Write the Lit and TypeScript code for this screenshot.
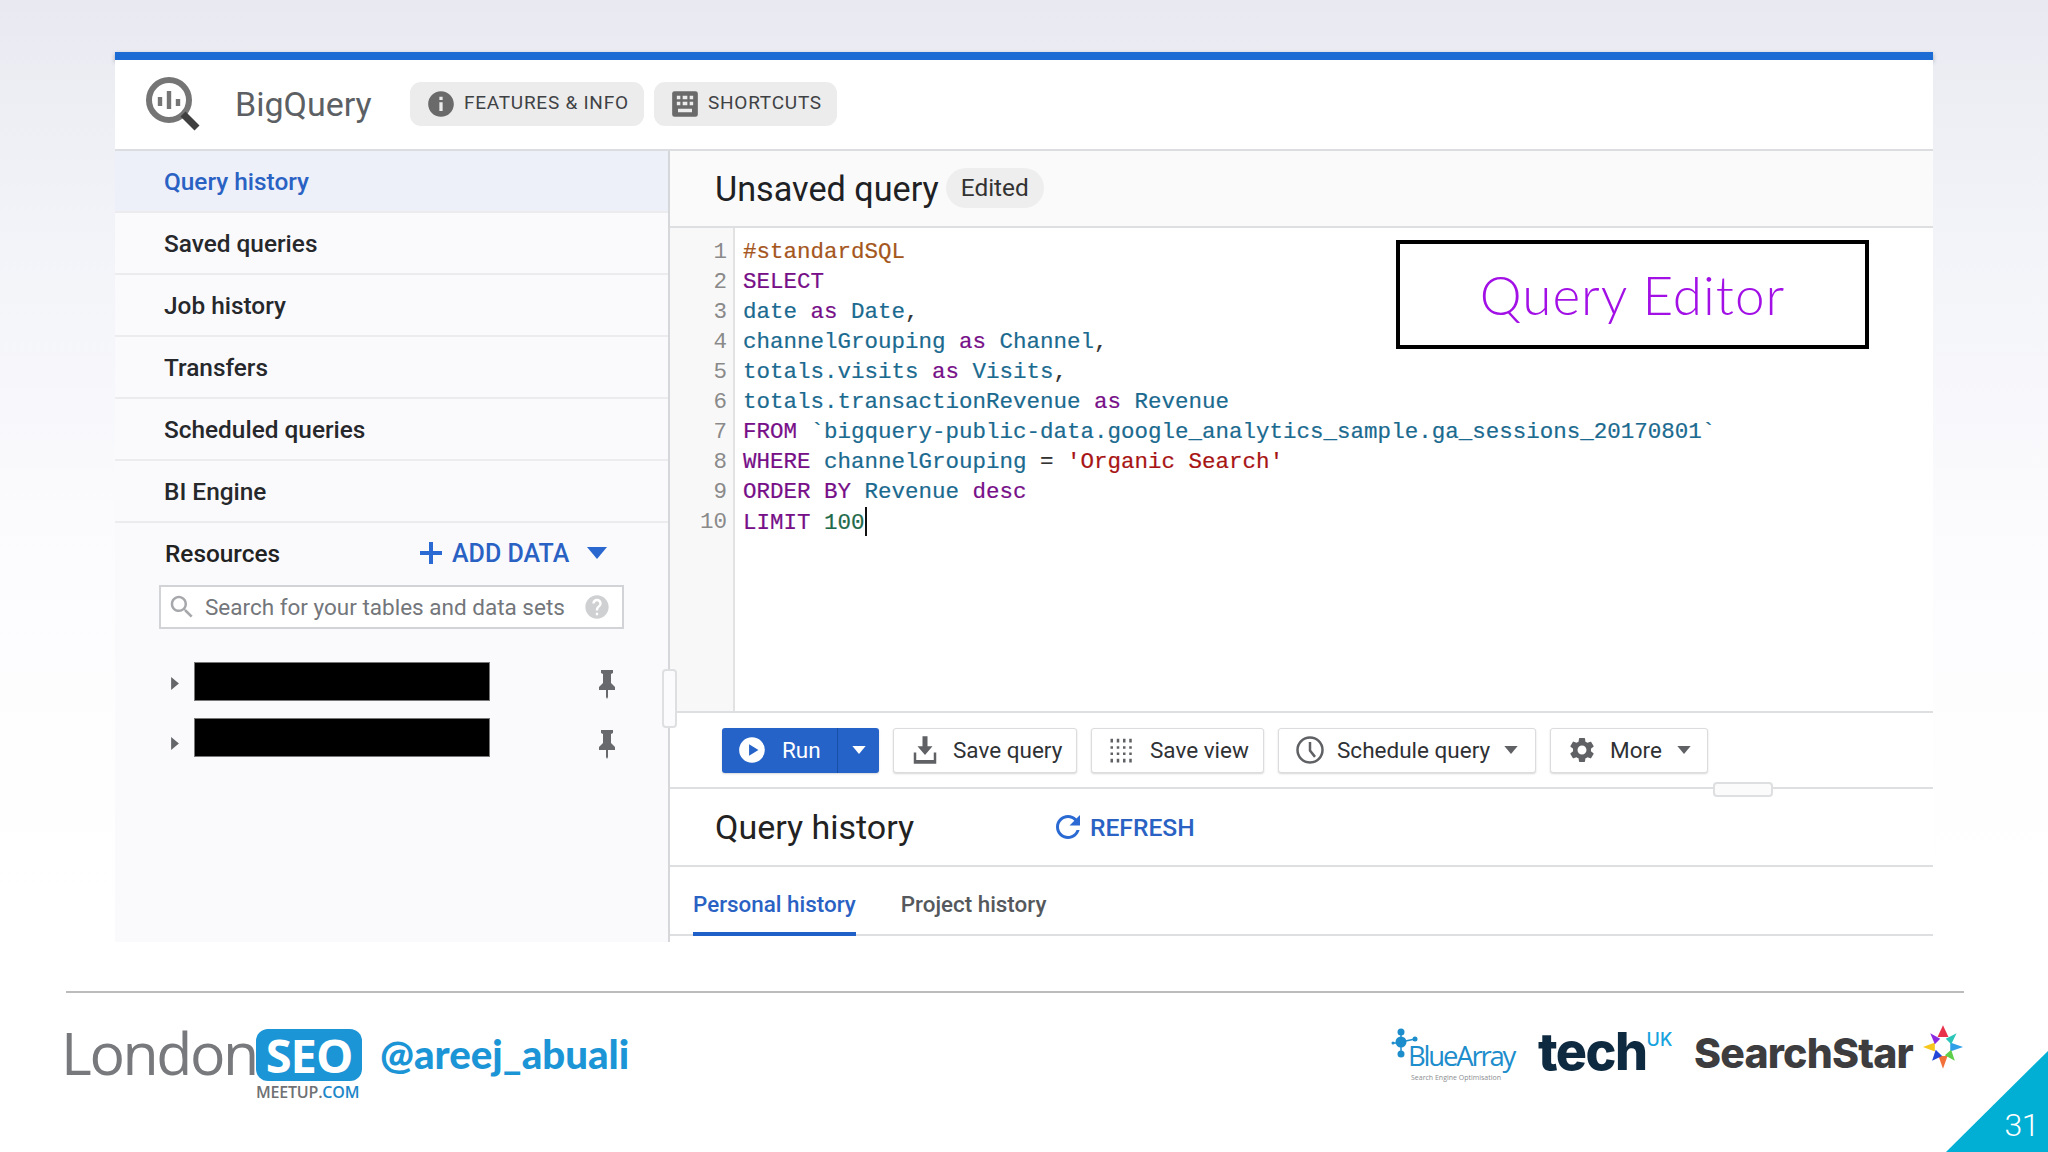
import { LitElement, html, css } from "lit";
import { customElement } from "lit/decorators.js";

type Tok = [string, string];
const K = "k", I = "i", P = "p", C = "c", S = "s", N = "n";
const CODE: Tok[][] = [
  [["#standardSQL", C]],
  [["SELECT", K]],
  [["date", I], [" ", P], ["as", K], [" ", P], ["Date", I], [",", P]],
  [["channelGrouping", I], [" ", P], ["as", K], [" ", P], ["Channel", I], [",", P]],
  [["totals.visits", I], [" ", P], ["as", K], [" ", P], ["Visits", I], [",", P]],
  [["totals.transactionRevenue", I], [" ", P], ["as", K], [" ", P], ["Revenue", I]],
  [["FROM", K], [" ", P], ["`bigquery-public-data.google_analytics_sample.ga_sessions_20170801`", I]],
  [["WHERE", K], [" ", P], ["channelGrouping", I], [" = ", P], ["'Organic Search'", S]],
  [["ORDER BY", K], [" ", P], ["Revenue", I], [" ", P], ["desc", K]],
  [["LIMIT", K], [" ", P], ["100", N]],
];
const NAV = ["Query history", "Saved queries", "Job history", "Transfers", "Scheduled queries", "BI Engine"];

const caret = html`<svg class="caret" viewBox="0 0 10 6"><path d="M0 0h10L5 6z"/></svg>`;
const pin = html`<svg class="pin" viewBox="0 0 24 32"><path d="M6 2h12v3l-2 1v9l4 4v3h-7v7l-1 2-1-2v-7H4v-3l4-4V6L6 5z"/></svg>`;
const tri = html`<svg class="tri" viewBox="0 0 6 10"><path d="M0 0l6 5-6 5z"/></svg>`;

@customElement("app-root")
export class AppRoot extends LitElement {
  static styles = css`
    :host { display: block; width: 2048px; height: 1152px; position: relative; overflow: hidden;
      background: linear-gradient(180deg, #e9eaf1 0, #f2f3f8 220px, #fcfcfe 560px, #fff 900px);
      font-family: Roboto, "Liberation Sans", sans-serif; }
    .slide { display: flex; flex-direction: column; padding-top: 52px; box-sizing: border-box; height: 1152px; }
    .frame { margin-left: 115px; width: 1818px; height: 890px; display: flex; flex-direction: column; flex: none; }
    .bluebar { height: 8px; background: #1a6bd4; box-shadow: 0 2px 4px rgba(60,70,90,.45); flex: none; }
    .top { height: 91px; padding-bottom: 2px; box-sizing: border-box; background: #fff; border-bottom: 2px solid #dcdde0; display: flex; align-items: center; flex: none; }
    .logo { width: 56px; height: 56px; margin-left: 30px; flex: none; }
    .brand { font-size: 34px; color: #5c5f63; margin-left: 34px; width: 175px; flex: none; }
    .pill { height: 44px; background: #ececec; border-radius: 11px; display: flex; align-items: center; box-sizing: border-box;
      font-size: 19px; letter-spacing: .75px; color: #3f4245; padding: 0 0 2px 17px; margin-right: 10px; flex: none; }
    .pill svg { width: 28px; height: 28px; fill: #6a6a6a; margin: 2px 9px 0 0; flex: none; }
    .p1 { width: 234px; } .p2 { width: 183px; }

    .body { flex: 1; display: flex; min-height: 0; }
    .side { width: 555px; box-sizing: border-box; flex: none; background: #fafafd; border-right: 2px solid #d6d7da; display: flex; flex-direction: column; }
    .nav { height: 62px; box-sizing: border-box; border-bottom: 2px solid #ececee; padding: 1px 0 0 49px; display: flex; align-items: center;
      font-size: 24.4px; font-weight: 500; color: #26282b; flex: none; }
    .nav.on { background: #eef0f9; color: #2a62c4; }
    .res { height: 60px; display: flex; align-items: center; padding-left: 50px; flex: none; }
    .res b { font-size: 24.4px; font-weight: 500; color: #222; width: 253px; }
    .add { display: flex; align-items: center; color: #2a62c4; font-size: 25px; font-weight: 500; }
    .add svg.plus { width: 26px; height: 26px; margin-right: 8px; }
    .add svg.caret { width: 20px; height: 12px; fill: #2a68d0; margin-left: 18px; }
    .search { margin: 2px 0 0 44px; width: 465px; height: 44px; box-sizing: border-box; border: 2px solid #d2d3d6; background: #fff;
      display: flex; align-items: center; font-size: 22.5px; color: #73767a; padding-left: 6px; flex: none; }
    .search svg.s { width: 30px; height: 30px; fill: #a6a8ab; margin-right: 8px; flex: none; }
    .search span { width: 380px; white-space: nowrap; flex: none; }
    .search svg.h { width: 28px; height: 28px; fill: #cfd0d2; flex: none; margin-left: -2px; }
    .tree { margin-top: 33px; display: flex; flex-direction: column; gap: 17px; }
    .trow { display: flex; align-items: center; height: 39px; }
    .tri { width: 8px; height: 13px; fill: #64666a; margin-left: 56px; margin-right: 15px; flex: none; }
    .redact { width: 296px; height: 39px; box-sizing: border-box; background: #000; border: 1px solid #777; flex: none; }
    .pin { width: 24px; height: 32px; fill: #67696c; margin-left: 105px; flex: none; }
    .trow:first-child .pin, .trow:first-child .tri { margin-top: 4px; }
    .trow:last-child .pin, .trow:last-child .tri { margin-top: 12px; }

    .main { flex: 1; display: flex; flex-direction: column; min-width: 0; background: #fff; }
    .qhead { height: 75px; background: #fafafa; border-bottom: 2px solid #dedfe1; display: flex; align-items: center; padding-left: 45px; flex: none; }
    .qhead h1 { margin: 0; font-weight: 400; font-size: 34.2px; color: #202124; }
    .edited { margin-left: 7px; height: 40px; padding: 0 15px; border-radius: 20px; background: #eeeeee; font-size: 24.4px; color: #333;
      display: flex; align-items: center; margin-top: -2px; }
    .editor { height: 485px; display: flex; border-bottom: 2px solid #dedfe1; box-sizing: border-box; flex: none; }
    .gutter { width: 65px; background: #f8f8f8; border-right: 2px solid #e2e2e2; flex: none; padding-top: 9px; box-sizing: border-box;
      font: 22.5px/30px "Liberation Mono", monospace; color: #8a8a8a; text-align: right; }
    .gutter div { padding-right: 6px; }
    .code { flex: 1; padding: 8.500px 0 0 8px; font: 22.5px/30px "Liberation Mono", monospace; white-space: pre; color: #333; -webkit-text-stroke: .2px; }
    .code .c { color: #a5561d; } .code .k { color: #770f88; } .code .i { color: #1b6a8f; }
    .code .s { color: #a81414; } .code .n { color: #1f6a4a; } .code .p { color: #333; }
    .cursor { display: inline-block; width: 2px; height: 29px; background: #111; vertical-align: -7px; }

    .tools { height: 76px; border-bottom: 2px solid #dedfe1; box-sizing: border-box; display: flex; align-items: center; padding: 0 0 0 52px; gap: 14px; flex: none; }
    .btn { height: 45px; box-sizing: border-box; border: 1px solid #dcdcdf; border-radius: 3px; background: #fff; box-shadow: 0 1px 2px rgba(0,0,0,.16);
      display: flex; align-items: center; font-size: 22.5px; color: #2f3134; flex: none; }
    .btn svg.ic { width: 30px; height: 30px; fill: #5f6164; flex: none; }
    .btn .caret { width: 14px; height: 8px; fill: #5f6164; flex: none; }
    .run { width: 157px; background: #2563c9; border: none; color: #fff; }
    .run .l { display: flex; align-items: center; width: 115px; height: 100%; padding-left: 16px; box-sizing: border-box; gap: 16px; }
    .run .r { flex: 1; height: 100%; border-left: 1px solid #174ea6; display: flex; align-items: center; justify-content: center; }
    .run .caret { fill: #fff; }
    .run svg.ic { width: 28px; height: 28px; fill: #fff; }
    .b1 { width: 184px; padding-left: 16px; gap: 13px; }
    .b2 { width: 173px; padding-left: 16px; gap: 12px; }
    .b3 { width: 258px; padding-left: 16px; gap: 12px; }
    .b4 { width: 158px; padding-left: 16px; gap: 13px; }
    .b3 .caret, .b4 .caret { margin-left: 2px; }

    .hist { height: 78px; border-bottom: 2px solid #dedfe1; box-sizing: border-box; display: flex; align-items: center; padding-left: 45px; flex: none; }
    .hist h2 { margin: 0; font-weight: 400; font-size: 34px; color: #222; width: 335px; }
    .refresh { display: flex; align-items: center; gap: 4px; color: #2a62c4; font-size: 24.6px; font-weight: 500; }
    .refresh svg { width: 36px; height: 36px; fill: #2a6ad2; }
    .tabs { height: 69px; border-bottom: 2px solid #dedfe1; box-sizing: border-box; display: flex; padding-left: 23px; gap: 45px; flex: none; font-size: 22.4px; font-weight: 500; }
    .tab { display: flex; align-items: center; color: #55585c; height: 69px; box-sizing: border-box; }
    .tab.on { color: #2a62c4; border-bottom: 4px solid #1f5fc8; padding-top: 9px; }
    .tab.off { padding-top: 5px; }

    .label { position: absolute; left: 1396px; top: 240px; width: 473px; height: 109px; box-sizing: border-box; border: 4px solid #000;
      display: flex; align-items: center; justify-content: center; font-family: Lato, sans-serif; font-weight: 300; font-size: 53px; letter-spacing: 1px; color: #a210e6; background: #fff; }
    .vgrip { position: absolute; left: 662px; top: 669px; width: 15px; height: 59px; box-sizing: border-box; border: 2px solid #dedfe1; border-radius: 4px; background: #fbfbfd; }
    .hgrip { position: absolute; left: 1713px; top: 782px; width: 60px; height: 15px; box-sizing: border-box; border: 2px solid #dedfe1; border-radius: 4px; background: #fbfbfb; }

    .rule { margin: 49px 0 0 66px; width: 1898px; height: 2px; background: #bcbcbc; flex: none; }
    .foot { display: flex; align-items: flex-start; padding-left: 61px; flex: none; }
    .london { font-family: "Open Sans", sans-serif; font-weight: 400; font-size: 59px; letter-spacing: -2.4px; color: #77797c; line-height: 60px; margin-top: 29px; width: 195px; flex: none; white-space: nowrap; }
    .seoWrap { display: flex; flex-direction: column; align-items: flex-start; margin-top: 36px; width: 124px; flex: none; }
    .seo { width: 106px; height: 52px; border-radius: 12px; background: #1c95d6; color: #fff; font-family: "Open Sans", sans-serif; font-weight: 700; font-size: 47px; line-height: 52px; text-align: center; letter-spacing: -1px; }
    .meet { font-family: "Open Sans", sans-serif; font-size: 16px; font-weight: 600; color: #6f7174; margin-top: 1px; letter-spacing: -.2px; line-height: 20px; }
    .meet span { color: #1c87c9; }
    .handle { font-family: Lato, sans-serif; font-weight: 900; font-size: 40.2px; color: #1c95d6; margin-top: 38px; line-height: 46px; width: 1011px; white-space: nowrap; flex: none; }
    .ba { width: 128px; margin-top: 37px; flex: none; display: flex; flex-direction: column; position: relative; }
    .ba svg { position: absolute; left: 0; top: -2px; width: 30px; height: 40px; }
    .ba .t { font-family: "Open Sans", sans-serif; font-size: 27.5px; letter-spacing: -2.2px; color: #1d8dcc; line-height: 34px; padding-left: 17px; margin-top: 9px; }
    .ba .u { font-family: "Open Sans", sans-serif; font-size: 7px; color: #8a8c8f; line-height: 9px; padding-left: 20px; white-space: nowrap; }
    .tech { display: flex; align-items: flex-start; width: 156px; margin-top: 28px; margin-left: 19px; flex: none; color: #0e2a40; font-family: Inter, sans-serif; font-weight: 800; font-size: 52px; letter-spacing: -1.5px; line-height: 62px; }
    .tech span { font-family: Inter, sans-serif; font-size: 18px; font-weight: 500; color: #17a3de; line-height: 22px; letter-spacing: 0; margin-top: 8px; }
    .ss { font-family: Inter, sans-serif; font-weight: 800; font-size: 41px; letter-spacing: -.8px; color: #3d3d40; line-height: 46px; margin-top: 37px; flex: none; width: 229px; white-space: nowrap; }
    .star { width: 40px; height: 44px; margin-top: 32px; flex: none; }

    .corner { position: absolute; right: 0; bottom: 0; width: 102px; height: 101px; background: #00afd3; clip-path: polygon(100% 0, 100% 100%, 0 100%); }
    .num { position: absolute; right: 9px; bottom: 9px; font-family: Roboto, sans-serif; font-weight: 300; font-size: 32px; letter-spacing: -.5px; color: #fff; line-height: 36px; }
  `;

  render() {
    return html`
      <div class="slide">
        <div class="frame">
          <div class="bluebar"></div>
          <div class="top">
            <svg class="logo" viewBox="0 0 56 56">
              <circle cx="24" cy="24" r="20" fill="none" stroke="#757575" stroke-width="6"/>
              <path d="M38 38l14 14" stroke="#3f3f3f" stroke-width="7"/>
              <path d="M15 21v9M24 15v18M33 23v7" stroke="#757575" stroke-width="4.4" fill="none"/>
            </svg>
            <div class="brand">BigQuery</div>
            <div class="pill p1">
              <svg viewBox="0 0 24 24"><path d="M12 1C5.900 1 1 5.900 1 12s4.900 11 11 11 11-4.900 11-11S18.100 1 12 1zm1.400 17h-2.800v-7.500h2.800V18zm0-9.500h-2.800V5.800h2.800v2.700z"/></svg>
              FEATURES &amp; INFO
            </div>
            <div class="pill p2">
              <svg viewBox="0 0 24 24"><path d="M3 1h18a2 2 0 0 1 2 2v18a2 2 0 0 1-2 2H3a2 2 0 0 1-2-2V3a2 2 0 0 1 2-2zm2 4v3h3V5H5zm5 0v3h4V5h-4zm6 0v3h3V5h-3zM5 10v3h3v-3H5zm5 0v3h4v-3h-4zm6 0v3h3v-3h-3zM6 16v3h12v-3H6z"/></svg>
              SHORTCUTS
            </div>
          </div>
          <div class="body">
            <div class="side">
              ${NAV.map((n, i) => html`<div class="nav ${i === 0 ? "on" : ""}">${n}</div>`)}
              <div class="res">
                <b>Resources</b>
                <div class="add">
                  <svg class="plus" viewBox="0 0 26 26"><path d="M13 2v22M2 13h22" stroke="#2a6ad2" stroke-width="4" fill="none"/></svg>
                  ADD DATA
                  ${caret}
                </div>
              </div>
              <div class="search">
                <svg class="s" viewBox="0 0 24 24"><path d="M15.500 14h-.79l-.28-.27C15.410 12.590 16 11.110 16 9.500 16 5.910 13.090 3 9.500 3S3 5.910 3 9.500 5.910 16 9.500 16c1.610 0 3.090-.59 4.230-1.570l.27.28v.79l5 4.990L20.490 19l-4.990-5zm-6 0C7.010 14 5 11.990 5 9.500S7.010 5 9.500 5 14 7.010 14 9.500 11.990 14 9.500 14z"/></svg>
                <span>Search for your tables and data sets</span>
                <svg class="h" viewBox="0 0 24 24"><path d="M12 2C6.480 2 2 6.480 2 12s4.480 10 10 10 10-4.480 10-10S17.520 2 12 2zm1 17h-2v-2h2v2zm2.070-7.750l-.9.920C13.450 12.900 13 13.500 13 15h-2v-.5c0-1.100.45-2.100 1.170-2.830l1.240-1.260c.37-.36.59-.86.59-1.410 0-1.100-.9-2-2-2s-2 .9-2 2H8c0-2.210 1.790-4 4-4s4 1.790 4 4c0 .88-.36 1.680-.93 2.250z"/></svg>
              </div>
              <div class="tree">
                <div class="trow">${tri}<div class="redact"></div>${pin}</div>
                <div class="trow">${tri}<div class="redact"></div>${pin}</div>
              </div>
            </div>
            <div class="main">
              <div class="qhead"><h1>Unsaved query</h1><div class="edited">Edited</div></div>
              <div class="editor">
                <div class="gutter">${CODE.map((_, i) => html`<div>${i + 1}</div>`)}</div>
                <div class="code">${CODE.map((line, i) => html`<div>${line.map(([t, c]) => html`<span class=${c}>${t}</span>`)}${i === 9 ? html`<span class="cursor"></span>` : ""}</div>`)}</div>
              </div>
              <div class="tools">
                <div class="btn run">
                  <div class="l">
                    <svg class="ic" viewBox="0 0 24 24"><path d="M12 1a11 11 0 1 0 0 22 11 11 0 0 0 0-22zM9.500 7l8 5-8 5z"/></svg>
                    Run
                  </div>
                  <div class="r">${caret}</div>
                </div>
                <div class="btn b1">
                  <svg class="ic" viewBox="0 0 24 24"><path d="M10 1h4v8h4l-6 7-6-7h4zM3 14h2v6h14v-6h2v9H3z"/></svg>
                  Save query
                </div>
                <div class="btn b2">
                  <svg class="ic" viewBox="0 0 24 24"><path d="M2 3h2v3H2zM7 3h2v3H7zM12 3h2v3h-2zM17 3h2v3h-2zM2 9h2v2H2zM7 9h2v2H7zM12 9h2v2h-2zM17 9h2v2h-2zM2 14h2v2H2zM7 14h2v2H7zM12 14h2v2h-2zM17 14h2v2h-2zM2 19h2v3H2zM7 19h2v3H7zM12 19h2v3h-2zM17 19h2v3h-2z"/></svg>
                  Save view
                </div>
                <div class="btn b3">
                  <svg class="ic" viewBox="0 0 24 24"><circle cx="12" cy="12" r="10" fill="none" stroke="#5f6164" stroke-width="2"/><path d="M12 5.500v7l4 5" fill="none" stroke="#5f6164" stroke-width="2"/></svg>
                  Schedule query
                  ${caret}
                </div>
                <div class="btn b4">
                  <svg class="ic" viewBox="0 0 24 24"><path d="M19.140 12.940c.04-.3.06-.61.06-.94 0-.32-.02-.64-.07-.94l2.030-1.580c.18-.14.23-.41.12-.61l-1.920-3.320c-.12-.22-.37-.29-.59-.22l-2.390.96c-.5-.38-1.030-.7-1.620-.94l-.36-2.540c-.04-.24-.24-.41-.48-.41h-3.840c-.24 0-.43.17-.47.41l-.36 2.540c-.59.24-1.130.57-1.620.94l-2.390-.96c-.22-.08-.47 0-.59.22L2.740 8.870c-.12.21-.08.47.12.61l2.030 1.580c-.05.3-.09.63-.09.94s.02.64.07.94l-2.030 1.580c-.18.14-.23.41-.12.61l1.920 3.320c.12.22.37.29.59.22l2.390-.96c.5.38 1.030.7 1.620.94l.36 2.540c.05.24.24.41.48.41h3.840c.24 0 .44-.17.47-.41l.36-2.540c.59-.24 1.130-.56 1.620-.94l2.390.96c.22.08.47 0 .59-.22l1.920-3.320c.12-.22.07-.47-.12-.61l-2.010-1.580zM12 15.600c-1.980 0-3.600-1.620-3.600-3.600s1.620-3.600 3.600-3.600 3.600 1.620 3.600 3.600-1.620 3.600-3.600 3.600z"/></svg>
                  More
                  ${caret}
                </div>
              </div>
              <div class="hist">
                <h2>Query history</h2>
                <div class="refresh">
                  <svg viewBox="0 0 24 24"><path d="M17.650 6.350C16.200 4.900 14.210 4 12 4c-4.420 0-7.990 3.580-7.990 8s3.570 8 7.990 8c3.730 0 6.840-2.550 7.730-6h-2.080c-.82 2.330-3.040 4-5.650 4-3.310 0-6-2.690-6-6s2.690-6 6-6c1.660 0 3.140.69 4.220 1.780L13 11h7V4l-2.350 2.350z"/></svg>
                  REFRESH
                </div>
              </div>
              <div class="tabs">
                <div class="tab on">Personal history</div>
                <div class="tab off">Project history</div>
              </div>
            </div>
          </div>
        </div>
        <div class="rule"></div>
        <div class="foot">
          <div class="london">London</div>
          <div class="seoWrap">
            <div class="seo">SEO</div>
            <div class="meet">MEETUP.<span>COM</span></div>
          </div>
          <div class="handle">@areej_abuali</div>
          <div class="ba">
            <svg viewBox="0 0 30 40" fill="#1d8dcc">
              <circle cx="10" cy="4" r="3.500"/><circle cx="10" cy="14" r="5.500"/><circle cx="10" cy="26" r="3.500"/><circle cx="24" cy="11" r="2.500"/><circle cx="2" cy="15" r="1.500"/>
              <path d="M10 4v22M10 14l14-3M2 15h8" stroke="#1d8dcc" stroke-width="1.500"/>
            </svg>
            <div class="t">BlueArray</div>
            <div class="u">Search Engine Optimisation</div>
          </div>
          <div class="tech">tech<span>UK</span></div>
          <div class="ss">SearchStar</div>
          <svg class="star" viewBox="0 0 44 48">
            <path d="M22 0l6 13H16z" fill="#e8334a"/>
            <path d="M22 48l-5-14h10z" fill="#f2703a"/>
            <path d="M0 24l13-5v10z" fill="#f6c81e"/>
            <path d="M44 24l-14-5v10z" fill="#2f9fe8"/>
            <path d="M8 9l11 6-6 6z" fill="#8a2be2"/>
            <path d="M37 9l-6 12-6-6z" fill="#2bc6b8"/>
            <path d="M10 39l4-12 7 7z" fill="#2446d8"/>
            <path d="M35 39l-11-6 7-6z" fill="#5fce4a"/>
          </svg>
        </div>
      </div>
      <div class="label">Query Editor</div>
      <div class="vgrip"></div>
      <div class="hgrip"></div>
      <div class="corner"></div>
      <div class="num">31</div>
    `;
  }
}
